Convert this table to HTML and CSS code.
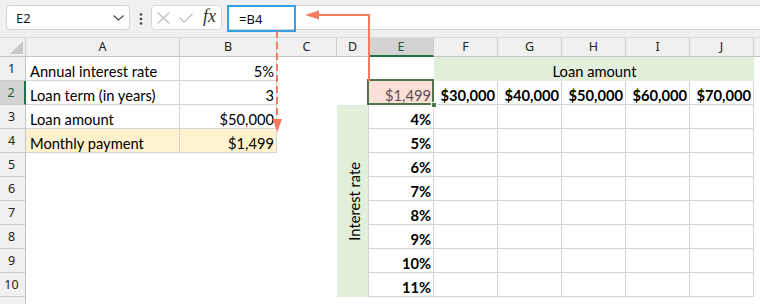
FILE: index.html
```html
<!DOCTYPE html>
<html>
<head>
<meta charset="utf-8">
<link rel="stylesheet" href="styles.css">
</head>
<body>
<div class="app">
  <div class="toolbar">
    <div class="namebox">
      <span class="nb-text">E2</span>
      <svg class="chev" width="11" height="6" viewBox="0 0 11 6"><path d="M0.5 0.5 L5.5 5 L10.5 0.5" fill="none" stroke="#444" stroke-width="1.1"/></svg>
    </div>
    <svg class="dots" width="4" height="12" viewBox="0 0 4 12"><circle cx="2" cy="1.5" r="1.3" fill="#444"/><circle cx="2" cy="6" r="1.3" fill="#444"/><circle cx="2" cy="10.5" r="1.3" fill="#444"/></svg>
    <div class="fxbox">
      <svg class="ico" width="13" height="12" viewBox="0 0 13 12"><path d="M0.5 0.5 L12.5 11.5 M12.5 0.5 L0.5 11.5" stroke="#bdbdbd" stroke-width="1.1" fill="none"/></svg>
      <svg class="ico" width="14" height="10" viewBox="0 0 14 10"><path d="M0.5 4.5 L5 9.3 L13.5 0.5" stroke="#bdbdbd" stroke-width="1.1" fill="none"/></svg>
      <span class="fx">fx</span>
    </div>
    <div class="formula">
      <div class="fbox">=B4</div>
    </div>
  </div>

  <div class="sheet">
    <!-- header row -->
    <div class="ch corner"><span class="tri"></span></div>
    <div class="ch">A</div>
    <div class="ch">B</div>
    <div class="ch">C</div>
    <div class="ch">D</div>
    <div class="ch sel">E</div>
    <div class="ch">F</div>
    <div class="ch">G</div>
    <div class="ch">H</div>
    <div class="ch">I</div>
    <div class="ch">J</div>
    <div class="ch last"></div>

    <!-- row 1 -->
    <div class="rh">1</div>
    <div class="c b">Annual interest rate</div>
    <div class="c b r">5%</div>
    <div class="c"></div>
    <div class="c"></div>
    <div class="c"></div>
    <div class="c green merged">Loan amount</div>
    <div class="c"></div>

    <!-- row 2 -->
    <div class="rh rsel">2</div>
    <div class="c b">Loan term (in years)</div>
    <div class="c b r">3</div>
    <div class="c"></div>
    <div class="c"></div>
    <div class="c b r e2">$1,499<span class="handle"></span></div>
    <div class="c b r bold">$30,000</div>
    <div class="c b r bold">$40,000</div>
    <div class="c b r bold">$50,000</div>
    <div class="c b r bold">$60,000</div>
    <div class="c b r bold">$70,000</div>
    <div class="c"></div>

    <!-- row 3 -->
    <div class="rh">3</div>
    <div class="c b">Loan amount</div>
    <div class="c b r">$50,000</div>
    <div class="c"></div>
    <div class="c green vmerge"><span class="vtext">Interest rate</span></div>
    <div class="c b r bold">4%</div>
    <div class="c b"></div><div class="c b"></div><div class="c b"></div><div class="c b"></div><div class="c b"></div>
    <div class="c"></div>

    <!-- row 4 -->
    <div class="rh">4</div>
    <div class="c b yellow">Monthly payment</div>
    <div class="c b r yellow">$1,499</div>
    <div class="c"></div>
    <div class="c b r bold">5%</div>
    <div class="c b"></div><div class="c b"></div><div class="c b"></div><div class="c b"></div><div class="c b"></div>
    <div class="c"></div>

    <!-- row 5 -->
    <div class="rh">5</div>
    <div class="c"></div><div class="c"></div><div class="c"></div>
    <div class="c b r bold">6%</div>
    <div class="c b"></div><div class="c b"></div><div class="c b"></div><div class="c b"></div><div class="c b"></div>
    <div class="c"></div>

    <!-- row 6 -->
    <div class="rh">6</div>
    <div class="c"></div><div class="c"></div><div class="c"></div>
    <div class="c b r bold">7%</div>
    <div class="c b"></div><div class="c b"></div><div class="c b"></div><div class="c b"></div><div class="c b"></div>
    <div class="c"></div>

    <!-- row 7 -->
    <div class="rh">7</div>
    <div class="c"></div><div class="c"></div><div class="c"></div>
    <div class="c b r bold">8%</div>
    <div class="c b"></div><div class="c b"></div><div class="c b"></div><div class="c b"></div><div class="c b"></div>
    <div class="c"></div>

    <!-- row 8 -->
    <div class="rh">8</div>
    <div class="c"></div><div class="c"></div><div class="c"></div>
    <div class="c b r bold">9%</div>
    <div class="c b"></div><div class="c b"></div><div class="c b"></div><div class="c b"></div><div class="c b"></div>
    <div class="c"></div>

    <!-- row 9 -->
    <div class="rh">9</div>
    <div class="c"></div><div class="c"></div><div class="c"></div>
    <div class="c b r bold">10%</div>
    <div class="c b"></div><div class="c b"></div><div class="c b"></div><div class="c b"></div><div class="c b"></div>
    <div class="c"></div>

    <!-- row 10 -->
    <div class="rh">10</div>
    <div class="c"></div><div class="c"></div><div class="c"></div>
    <div class="c b r bold">11%</div>
    <div class="c b"></div><div class="c b"></div><div class="c b"></div><div class="c b"></div><div class="c b"></div>
    <div class="c"></div>

    <!-- row 11 (cut off by the window) -->
    <div class="rh"></div>
  </div>

  <svg class="overlay" width="760" height="304" viewBox="0 0 760 304">
    <path d="M369 81 L369 15 L318 15" fill="none" stroke="#f47b5f" stroke-width="2"/>
    <path d="M305 15 L319 10.5 L319 19.5 Z" fill="#f47b5f"/>
    <path d="M277 31 L277 119" fill="none" stroke="#f47b5f" stroke-width="2" stroke-dasharray="7 4"/>
    <path d="M272.5 119 L282 119 L277.3 132 Z" fill="#f47b5f"/>
  </svg>
</div>
</body>
</html>
```

FILE: styles.css
```css
* { box-sizing: border-box; }
html, body { margin: 0; padding: 0; background: #fff; }
body { width: 760px; height: 304px; overflow: hidden; }

.app { position: relative; width: 760px; height: 304px; overflow: hidden; }

.toolbar {
  height: 37px;
  background: #eff0f2;
  display: flex;
  align-items: flex-start;
  padding-top: 5px;
  font-family: "Noto Sans", "Open Sans", sans-serif;
}

.namebox {
  margin-left: 6px;
  width: 124px;
  height: 25px;
  background: #fff;
  border: 1px solid #d3d3d3;
  border-radius: 4px;
  display: flex;
  align-items: center;
  justify-content: space-between;
  padding: 0 5px 0 9px;
}
.nb-text { font-size: 13px; color: #1a1a1a; }
.chev { display: block; margin-top: 1px; }

.dots { display: block; margin: 8px 0 0 9px; }

.fxbox {
  margin-left: 8px;
  width: 71px;
  height: 25px;
  background: #fff;
  border: 1px solid #d8d8d8;
  border-radius: 4px;
  display: flex;
  align-items: center;
  padding-left: 5px;
  gap: 9px;
}
.ico { display: block; }
.fx {
  font-family: "Liberation Serif", "DejaVu Serif", serif;
  font-style: italic;
  font-size: 18px;
  color: #333;
  margin-left: 1px;
  margin-top: -2px;
}

.formula {
  flex: 1;
  margin-left: 6px;
  height: 25px;
  background: #fff;
  border-top: 1px solid #d4d4d4;
  border-bottom: 1px solid #d4d4d4;
  position: relative;
}
.fbox {
  position: absolute;
  left: -1px;
  top: -1px;
  width: 69px;
  height: 27px;
  border: 2px solid #35a0e5;
  font-size: 13px;
  color: #111;
  padding: 3px 0 0 10px;
}

.sheet {
  display: grid;
  grid-template-columns: 26px 154px 97px 60px 32px 65px 64px 64px 64px 64px 64px 6px;
  grid-template-rows: 20px repeat(11, 24px);
  font-family: Lato, "Liberation Sans", sans-serif;
  font-size: 14.7px;
  color: #000;
}

.ch {
  background: #f0f0f0;
  border-right: 1px solid #cbcbcb;
  border-bottom: 1px solid #c4c4c4;
  border-top: 1px solid #dadada;
  font-family: "Noto Sans", "Open Sans", sans-serif;
  font-size: 12.5px;
  color: #222;
  text-align: center;
  line-height: 18px;
}
.ch.last { border-right: none; }
.ch.sel {
  background: #d3d3d3;
  color: #1e5e36;
  border-bottom: 2px solid #217346;
}
.corner { position: relative; }
.tri {
  position: absolute;
  right: 2px;
  bottom: 2px;
  width: 0; height: 0;
  border-left: 13px solid transparent;
  border-bottom: 13px solid #c8c8c8;
}

.rh {
  background: #f0f0f0;
  border-right: 1px solid #c4c4c4;
  border-bottom: 1px solid #cbcbcb;
  font-family: "Noto Sans", "Open Sans", sans-serif;
  font-size: 12.5px;
  color: #222;
  text-align: center;
  line-height: 24px;
  padding-right: 2px;
}
.rh.rsel {
  background: #d3d3d3;
  border-right: 2px solid #217346;
  color: #1e5e36;
}

.c {
  padding: 4px 3px 0 4px;
  line-height: 20px;
  white-space: nowrap;
  overflow: visible;
}
.b {
  border-right: 1px solid #d4d4d4;
  border-bottom: 1px solid #d4d4d4;
}
.r { text-align: right; padding-right: 2px; }
.bold { font-weight: 700; }
.yellow { background: #fff2cc; }
.green { background: #e2efda; }

.merged {
  grid-column: span 5;
  text-align: center;
}

.vmerge {
  grid-row: span 8;
  display: flex;
  align-items: center;
  justify-content: center;
  padding: 0;
  border-right: 1px solid #d4d4d4;
}
.vtext {
  writing-mode: vertical-rl;
  transform: rotate(180deg);
  line-height: 20px;
  margin-left: 2px;
}

.e2 {
  position: relative;
  background: #fbe0d8;
  color: #5e4e52;
}
.e2::after {
  content: "";
  position: absolute;
  left: -2px;
  top: -2px;
  right: -1px;
  bottom: -1px;
  border: 2px solid #4c7548;
}
.handle {
  position: absolute;
  right: -4px;
  bottom: -4px;
  width: 6px;
  height: 6px;
  background: #4c7548;
  border: 1px solid #fff;
  z-index: 2;
}

.overlay {
  position: absolute;
  left: 0;
  top: 0;
  pointer-events: none;
}
```
